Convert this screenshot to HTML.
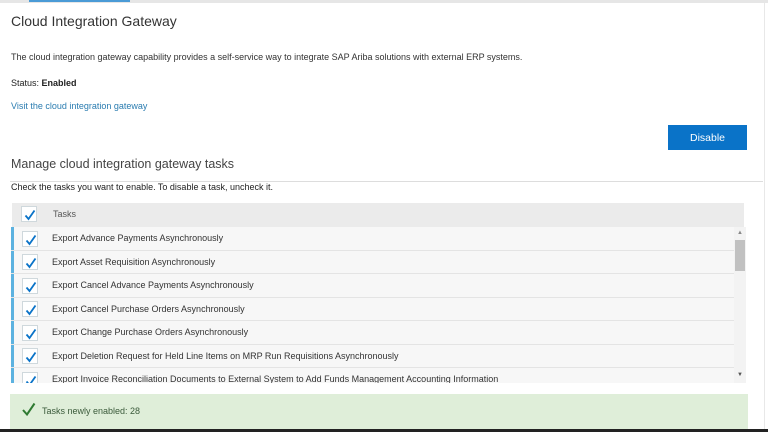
<!DOCTYPE html>
<html><head><style>
*{margin:0;padding:0;box-sizing:border-box}
body{width:768px;height:432px;overflow:hidden;background:#fff;font-family:"Liberation Sans",Arial,sans-serif;position:relative;color:#333}
.a{position:absolute;white-space:nowrap}
.row{position:absolute;left:11px;width:723px;height:23.5px;background:#f7f7f7;border-bottom:1px solid #e4e4e4}
.row .bar{position:absolute;left:0;top:0;width:3px;height:100%;background:#5cb2e0}
.cb{position:absolute;left:11px;top:3.5px;width:16px;height:16px;border:1px solid #cfd8dc;background:#fff}
.cb svg{position:absolute;left:2px;top:2px}
.row .t{position:absolute;left:41px;top:6px;font-size:9px;color:#333}
</style></head><body>
<div class="a" style="left:0;top:0;width:768px;height:3px;background:#e6e6e6"></div>
<div class="a" style="left:29px;top:0;width:101px;height:2px;background:#4a9bd6"></div>
<div class="a" style="left:764px;top:3px;width:1px;height:426px;background:#e8e8e8"></div>
<div class="a" style="left:11px;top:13px;font-size:14px;color:#333">Cloud Integration Gateway</div>
<div class="a" style="left:11px;top:52px;font-size:9px">The cloud integration gateway capability provides a self-service way to integrate SAP Ariba solutions with external ERP systems.</div>
<div class="a" style="left:11px;top:78px;font-size:9px;color:#222">Status: <b>Enabled</b></div>
<div class="a" style="left:11px;top:101px;font-size:9px;color:#2a7cb0">Visit the cloud integration gateway</div>
<div class="a" style="left:668px;top:125px;width:79px;height:25px;background:#0a73c8;color:#fff;font-size:10.5px;text-align:center;line-height:26px">Disable</div>
<div class="a" style="left:11px;top:157px;font-size:12.5px;color:#444">Manage cloud integration gateway tasks</div>
<div class="a" style="left:10px;top:181px;width:753px;height:1px;background:#ddd"></div>
<div class="a" style="left:11px;top:182px;font-size:9px;color:#222">Check the tasks you want to enable. To disable a task, uncheck it.</div>
<div class="a" style="left:12px;top:203px;width:732px;height:24px;background:#ebebeb"></div>
<div class="a" style="left:21px;top:206px;width:16px;height:16px;border:1px solid #cfd8dc;background:#fff"><svg width="12" height="12" style="position:absolute;left:2px;top:2px"><path d="M1.5 6.5 L4.5 10 L10.5 1.5" stroke="#0a73c8" stroke-width="1.8" fill="none"/></svg></div>
<div class="a" style="left:53px;top:209px;font-size:9px;color:#555">Tasks</div>
<div class="a" style="left:11px;top:227px;width:735px;height:156px;overflow:hidden;background:#f7f7f7">
<div class="row" style="left:0;top:0"><div class="bar"></div><div class="cb"><svg width="12" height="12"><path d="M1.5 6.5 L4.5 10 L10.5 1.5" stroke="#0a73c8" stroke-width="1.8" fill="none"/></svg></div><div class="t">Export Advance Payments Asynchronously</div></div>
<div class="row" style="left:0;top:23.5px"><div class="bar"></div><div class="cb"><svg width="12" height="12"><path d="M1.5 6.5 L4.5 10 L10.5 1.5" stroke="#0a73c8" stroke-width="1.8" fill="none"/></svg></div><div class="t">Export Asset Requisition Asynchronously</div></div>
<div class="row" style="left:0;top:47px"><div class="bar"></div><div class="cb"><svg width="12" height="12"><path d="M1.5 6.5 L4.5 10 L10.5 1.5" stroke="#0a73c8" stroke-width="1.8" fill="none"/></svg></div><div class="t">Export Cancel Advance Payments Asynchronously</div></div>
<div class="row" style="left:0;top:70.5px"><div class="bar"></div><div class="cb"><svg width="12" height="12"><path d="M1.5 6.5 L4.5 10 L10.5 1.5" stroke="#0a73c8" stroke-width="1.8" fill="none"/></svg></div><div class="t">Export Cancel Purchase Orders Asynchronously</div></div>
<div class="row" style="left:0;top:94px"><div class="bar"></div><div class="cb"><svg width="12" height="12"><path d="M1.5 6.5 L4.5 10 L10.5 1.5" stroke="#0a73c8" stroke-width="1.8" fill="none"/></svg></div><div class="t">Export Change Purchase Orders Asynchronously</div></div>
<div class="row" style="left:0;top:117.5px"><div class="bar"></div><div class="cb"><svg width="12" height="12"><path d="M1.5 6.5 L4.5 10 L10.5 1.5" stroke="#0a73c8" stroke-width="1.8" fill="none"/></svg></div><div class="t">Export Deletion Request for Held Line Items on MRP Run Requisitions Asynchronously</div></div>
<div class="row" style="left:0;top:141px"><div class="bar"></div><div class="cb"><svg width="12" height="12"><path d="M1.5 6.5 L4.5 10 L10.5 1.5" stroke="#0a73c8" stroke-width="1.8" fill="none"/></svg></div><div class="t">Export Invoice Reconciliation Documents to External System to Add Funds Management Accounting Information</div></div>
<div class="a" style="left:723px;top:0;width:12px;height:156px;background:#f3f3f3"></div>
<div class="a" style="left:724px;top:13px;width:10px;height:31px;background:#c1c1c1"></div>
<div class="a" style="left:726px;top:3px;font-size:6px;color:#888">▲</div>
<div class="a" style="left:726px;top:145px;font-size:6px;color:#555">▼</div>
</div>
<div class="a" style="left:10px;top:394px;width:738px;height:36px;background:#dfeed9"></div>
<svg class="a" style="left:22px;top:402px" width="14" height="14"><path d="M1 8 L5 12.5 L12.5 1.5" stroke="#2f7a32" stroke-width="2" fill="none"/></svg>
<div class="a" style="left:42px;top:406px;font-size:9px;color:#3a5a3a">Tasks newly enabled: 28</div>
<div class="a" style="left:0;top:429px;width:768px;height:3px;background:#222"></div>
</body></html>
